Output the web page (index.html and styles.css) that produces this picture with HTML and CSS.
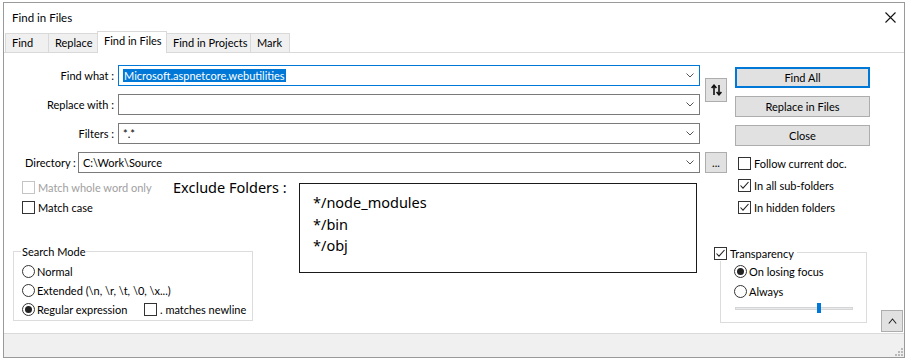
FILE: index.html
```html
<!DOCTYPE html>
<html lang="en">
<head>
    <title>Find in Files</title>
    <meta charset="utf-8">
    <link rel="stylesheet" href="styles.css">
</head>
<body>
    <div class="window">
        <!-- Title bar -->
        <div class="titlebar">
            <span class="title">Find in Files</span>
            <svg class="close" width="11" height="11" viewBox="0 0 11 11"><path d="M0.5 0.5L10.5 10.5M10.5 0.5L0.5 10.5" stroke="#111" stroke-width="1.1"/></svg>
        </div>

        <!-- Tabs -->
        <div class="tabs">
            <span class="tab tab-find">Find</span>
            <span class="tab tab-replace">Replace</span>
            <span class="tab tab-files active">Find in Files</span>
            <span class="tab tab-projects">Find in Projects</span>
            <span class="tab tab-mark">Mark</span>
        </div>

        <div class="panel">
            <div class="main">
                <div class="fields">
                    <label class="field-label">Find what :</label>
                    <div class="combo focused">
                        <span class="value"><span class="selection">Microsoft.aspnetcore.webutilities</span></span>
                        <svg class="chev" width="8" height="5" viewBox="0 0 8 5"><path d="M0.5 0.5L4 4L7.5 0.5" fill="none" stroke="#555"/></svg>
                    </div>
                    <button class="small swap">
                        <svg width="11" height="12" viewBox="0 0 11 12"><path d="M3 11V1.5M0.6 4L3 1.2L5.4 4M8 1V10.5M5.6 8L8 10.8L10.4 8" fill="none" stroke="#111" stroke-width="1.6"/></svg>
                    </button>

                    <label class="field-label">Replace with :</label>
                    <div class="combo">
                        <span class="value"></span>
                        <svg class="chev" width="8" height="5" viewBox="0 0 8 5"><path d="M0.5 0.5L4 4L7.5 0.5" fill="none" stroke="#555"/></svg>
                    </div>

                    <label class="field-label">Filters :</label>
                    <div class="combo">
                        <span class="value">*.*</span>
                        <svg class="chev" width="8" height="5" viewBox="0 0 8 5"><path d="M0.5 0.5L4 4L7.5 0.5" fill="none" stroke="#555"/></svg>
                    </div>

                    <div class="dir-row">
                        <label class="field-label">Directory :</label>
                        <div class="combo dir">
                            <span class="value">C:\Work\Source</span>
                            <svg class="chev" width="8" height="5" viewBox="0 0 8 5"><path d="M0.5 0.5L4 4L7.5 0.5" fill="none" stroke="#555"/></svg>
                        </div>
                    </div>
                    <button class="small dots">...</button>
                </div>

                <div class="lower">
                    <div class="lower-left">
                        <div class="opts-row">
                            <div class="opts">
                                <div class="check disabled"><span class="box"></span>Match whole word only</div>
                                <div class="check"><span class="box"></span>Match case</div>
                            </div>
                            <div class="exclude-label">Exclude Folders :</div>
                        </div>

                        <div class="group search-mode">
                            <span class="group-title">Search Mode</span>
                            <div class="radio"><span class="circle"></span>Normal</div>
                            <div class="radio"><span class="circle"></span>Extended (\n, \r, \t, \0, \x...)</div>
                            <div class="radio">
                                <span class="circle on"></span><span class="rx-label">Regular expression</span>
                                <div class="check"><span class="box"></span>. matches newline</div>
                            </div>
                        </div>
                    </div>

                    <div class="exclude-box">
                        */node_modules<br>
                        */bin<br>
                        */obj
                    </div>
                </div>
            </div>

            <!-- Right column -->
            <div class="side">
                <div class="side-buttons">
                    <button class="btn default">Find All</button>
                    <button class="btn">Replace in Files</button>
                    <button class="btn">Close</button>
                </div>
                <div class="side-checks">
                    <div class="check"><span class="box"></span>Follow current doc.</div>
                    <div class="check"><span class="box"><svg width="11" height="11" viewBox="0 0 11 11"><path d="M1.5 5.5L4 8.2L9.5 2" fill="none" stroke="#222" stroke-width="1.1"/></svg></span>In all sub-folders</div>
                    <div class="check"><span class="box"><svg width="11" height="11" viewBox="0 0 11 11"><path d="M1.5 5.5L4 8.2L9.5 2" fill="none" stroke="#222" stroke-width="1.1"/></svg></span>In hidden folders</div>
                </div>

                <div class="trans-block">
                    <div class="group trans-group">
                        <div class="check trans-head"><span class="box"><svg width="11" height="11" viewBox="0 0 11 11"><path d="M1.5 5.5L4 8.2L9.5 2" fill="none" stroke="#222" stroke-width="1.1"/></svg></span>Transparency</div>
                        <div class="radio"><span class="circle on"></span>On losing focus</div>
                        <div class="radio"><span class="circle"></span>Always</div>
                        <div class="slider"><span class="track"></span><span class="thumb"></span></div>
                    </div>
                    <button class="small collapse">
                        <svg width="9" height="6" viewBox="0 0 9 6"><path d="M0.8 5.5L4.5 1L8.2 5.5" fill="none" stroke="#222" stroke-width="1.1"/></svg>
                    </button>
                </div>
            </div>
        </div>

        <div class="statusbar">
            <svg class="grip" width="9" height="9" viewBox="0 0 9 9" fill="#b9b9b9">
                <rect x="7" y="1" width="2" height="2"/>
                <rect x="4" y="4" width="2" height="2"/><rect x="7" y="4" width="2" height="2"/>
                <rect x="1" y="7" width="2" height="2"/><rect x="4" y="7" width="2" height="2"/><rect x="7" y="7" width="2" height="2"/>
            </svg>
        </div>
    </div>
</body>
</html>
```

FILE: styles.css
```css
/* General styles */
body {
    margin: 0;
    background: #ffffff;
    font-family: 'Lato', 'Noto Sans', sans-serif;
    font-size: 11px;
    color: #000;
}

button {
    font-family: inherit;
    font-size: 11px;
    color: #000;
    padding: 0;
}

/* Window frame */
.window {
    margin: 2px 0 0 3px;
    width: 902px;
    height: 356px;
    box-sizing: border-box;
    border: 1px solid #9a9a9a;
    display: flex;
    flex-direction: column;
    background: #ffffff;
}

.titlebar {
    height: 29px;
    display: flex;
    align-items: center;
    justify-content: space-between;
    padding: 0 8px;
}

.title {
    font-size: 11.5px;
}

/* Tabs */
.tabs {
    height: 20px;
    display: flex;
    align-items: flex-end;
    padding-left: 1px;
    position: relative;
    z-index: 1;
}

.tab {
    height: 19px;
    box-sizing: border-box;
    padding-left: 6px;
    line-height: 17px;
    background: #f0f0f0;
    border: 1px solid #d9d9d9;
    border-bottom: none;
    margin-right: -1px;
    white-space: nowrap;
}

.tab-find { width: 44px; }
.tab-replace { width: 50px; }
.tab-files { width: 70px; }
.tab-projects { width: 85px; }
.tab-mark { width: 40px; }

.tab.active {
    height: 22px;
    margin-bottom: -1px;
    background: #ffffff;
    line-height: 18px;
}

.panel {
    flex: 1;
    display: flex;
    border-top: 1px solid #d9d9d9;
}

/* Left part */
.main {
    width: 723px;
    display: flex;
    flex-direction: column;
}

.fields {
    display: grid;
    grid-template-columns: 114px 582px 27px;
    grid-template-rows: repeat(4, 21px);
    row-gap: 8px;
    padding-top: 12px;
}

.field-label {
    text-align: right;
    padding-right: 4px;
    line-height: 21px;
    white-space: nowrap;
}

.combo {
    display: flex;
    align-items: center;
    justify-content: space-between;
    box-sizing: border-box;
    height: 21px;
    border: 1px solid #7a7a7a;
    padding: 0 5px 0 4px;
}

.combo.focused {
    border-color: #0078d7;
}

.combo .value {
    line-height: 19px;
}

.selection {
    background: #0078d7;
    color: #fff;
    padding: 0 1px;
    line-height: 13px;
    display: inline-block;
}

.dir-row {
    grid-column: 1 / 3;
    display: flex;
    justify-content: space-between;
    padding-left: 21px;
}

.dir-row .field-label {
    padding-right: 0;
}

.combo.dir {
    width: 622px;
    flex-shrink: 0;
}

.small {
    width: 22px;
    box-sizing: border-box;
    background: #e1e1e1;
    border: 1px solid #adadad;
    display: flex;
    align-items: center;
    justify-content: center;
    justify-self: end;
}

.swap {
    grid-column: 3;
    grid-row: 1 / 3;
    align-self: center;
    height: 24px;
}

.dots {
    grid-column: 3;
    grid-row: 4;
    height: 21px;
    line-height: 14px;
}

/* Checkboxes and radios */
.check,
.radio {
    display: flex;
    align-items: center;
    height: 20px;
    white-space: nowrap;
}

.box {
    width: 13px;
    height: 13px;
    box-sizing: border-box;
    border: 1px solid #333;
    margin-right: 3px;
    display: flex;
    align-items: center;
    justify-content: center;
    background: #fff;
}

.check.disabled {
    color: #a0a0a0;
}

.check.disabled .box {
    border-color: #c4c4c4;
}

.circle {
    width: 13px;
    height: 13px;
    box-sizing: border-box;
    border: 1px solid #333;
    border-radius: 50%;
    margin-right: 2px;
    display: flex;
    align-items: center;
    justify-content: center;
}

.circle.on::after {
    content: "";
    width: 7px;
    height: 7px;
    border-radius: 50%;
    background: #222;
}

/* Lower area */
.lower {
    display: flex;
}

.lower-left {
    width: 295px;
}

.opts-row {
    display: flex;
    margin-top: 4px;
}

.opts {
    width: 151px;
    padding-left: 18px;
}

.exclude-label {
    font-family: 'Noto Sans', sans-serif;
    font-size: 14.5px;
    line-height: 20px;
    white-space: nowrap;
}

.group {
    border: 1px solid #dcdcdc;
    box-sizing: border-box;
}

.group-title {
    display: table;
    margin: -8px 0 0 7px;
    padding: 0 1px;
    line-height: 16px;
    background: #fff;
}

.search-mode {
    margin: 34px 0 0 9px;
    width: 240px;
    height: 70px;
}

.search-mode .radio {
    height: 19px;
    padding-left: 8px;
}

.search-mode .radio:first-of-type {
    margin-top: 2px;
}

.rx-label {
    width: 107px;
}

.exclude-box {
    margin-top: 10px;
    width: 398px;
    height: 90px;
    box-sizing: border-box;
    border: 1px solid #1a1a1a;
    padding: 8px 13px;
    font-family: 'Noto Sans', sans-serif;
    font-size: 14.5px;
    line-height: 21.5px;
}

/* Right column */
.side {
    width: 176px;
    display: flex;
    flex-direction: column;
}

.side-buttons {
    display: flex;
    flex-direction: column;
    gap: 8px;
    padding: 14px 0 0 8px;
}

.btn {
    width: 135px;
    height: 21px;
    box-sizing: border-box;
    background: #e1e1e1;
    border: 1px solid #adadad;
}

.btn.default {
    border-color: #0078d7;
    box-shadow: inset 0 0 0 1px #0078d7;
}

.side-checks {
    margin: 6px 0 0 11px;
}

.side-checks .check {
    height: 22px;
}

.trans-block {
    display: flex;
    align-items: flex-end;
    margin: 34px 0 0 -7px;
}

.trans-group {
    width: 148px;
    height: 71px;
    margin-bottom: 10px;
}

.trans-head {
    width: fit-content;
    height: 16px;
    margin: -8px 0 0 -7px;
    padding-right: 3px;
    background: #fff;
}

.trans-group .radio {
    padding-left: 13px;
}

.trans-group .radio:first-of-type {
    margin-top: 1px;
}

.slider {
    position: relative;
    height: 12px;
    margin: 1px 0 0 14px;
    width: 118px;
    display: flex;
    align-items: center;
}

.track {
    width: 100%;
    height: 3px;
    background: #e7eaea;
    border: 1px solid #d6d6d6;
    box-sizing: border-box;
}

.thumb {
    position: absolute;
    left: 82px;
    top: 1px;
    width: 4px;
    height: 10px;
    background: #0078d7;
}

.collapse {
    height: 22px;
    margin: 0 0 1px 14px;
}

/* Status bar */
.statusbar {
    height: 24px;
    box-sizing: border-box;
    background: #f0f0f0;
    border-top: 1px solid #dadada;
    display: flex;
    align-items: flex-end;
    justify-content: flex-end;
    padding: 0 1px 1px 0;
}
```
